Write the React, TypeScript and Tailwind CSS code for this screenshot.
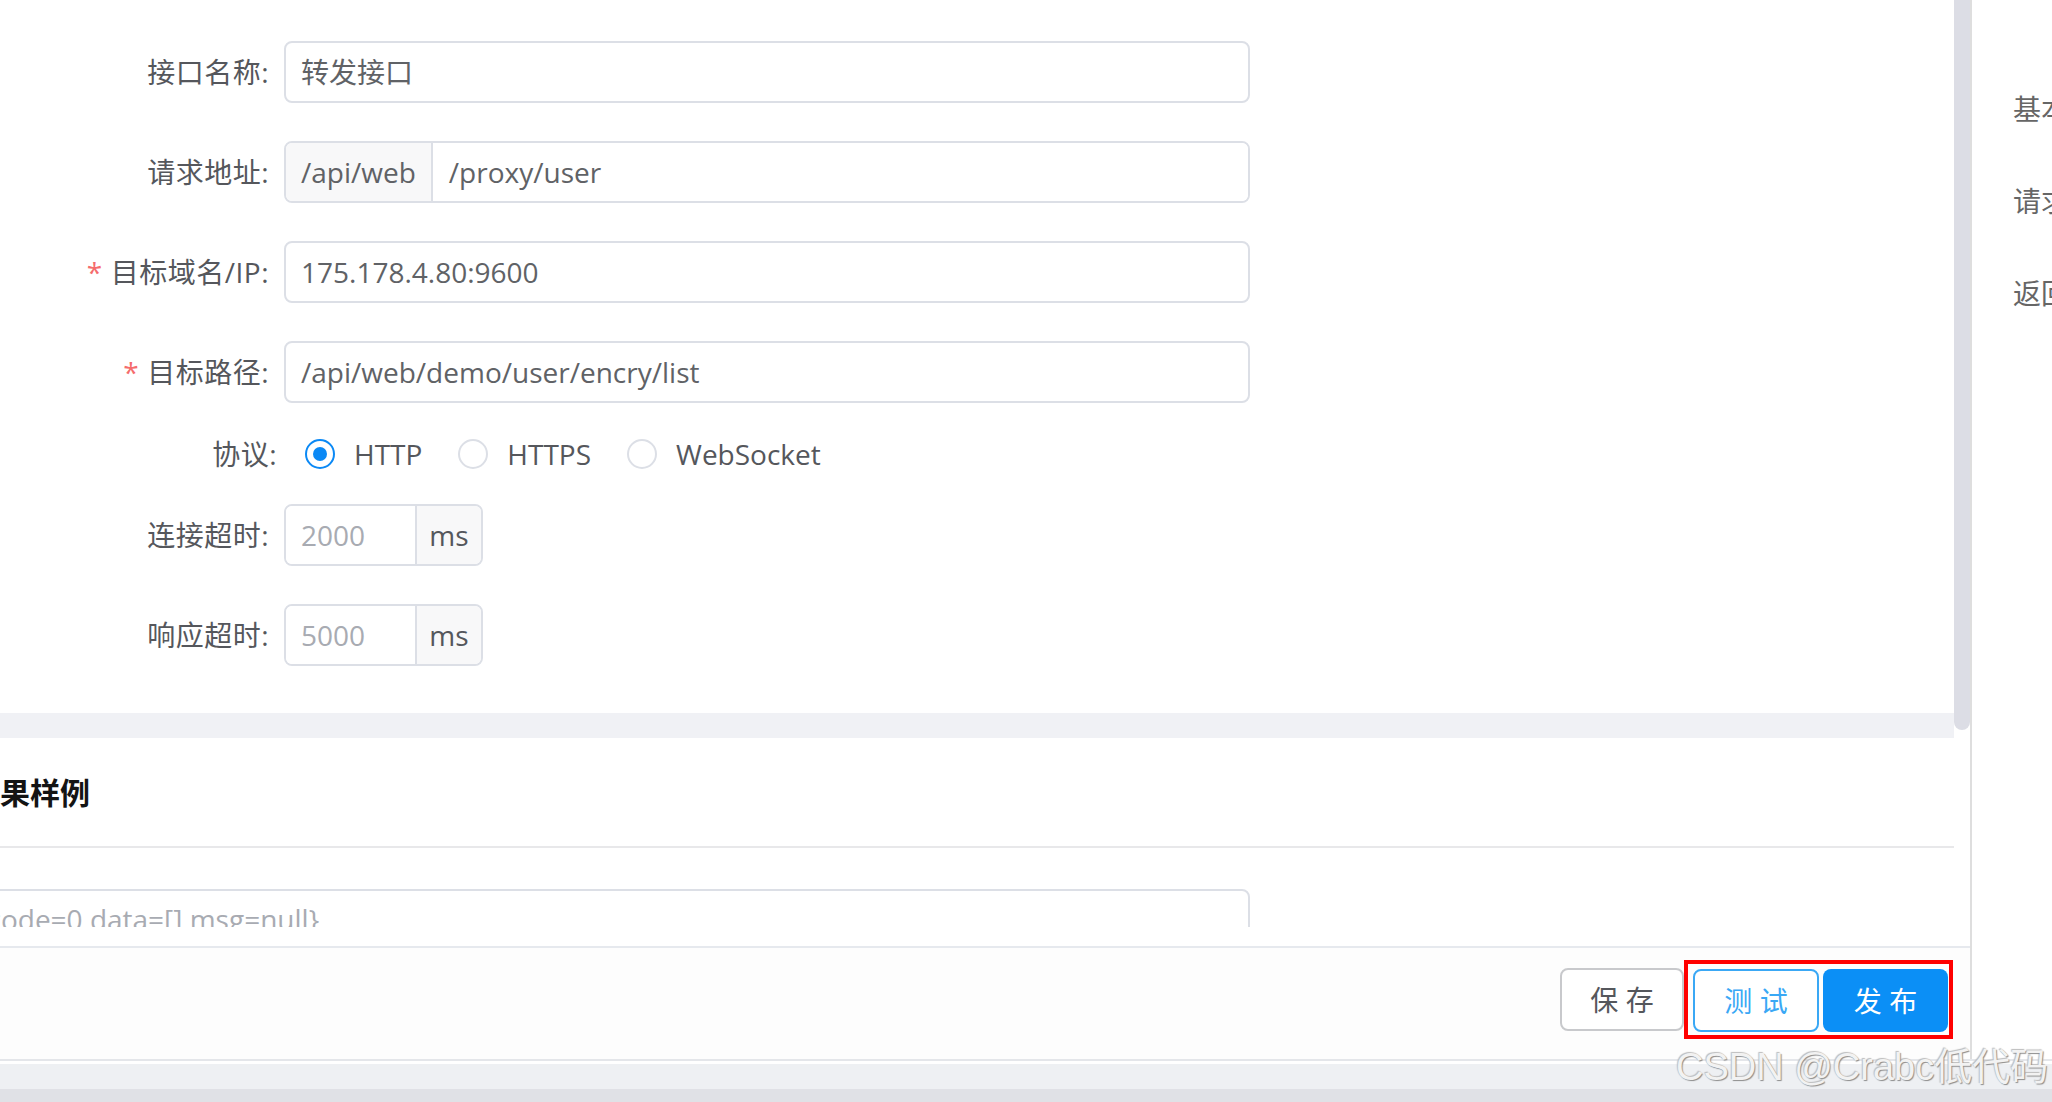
import React from "react";

const FONT = '"Open Sans", "Noto Sans CJK SC", sans-serif';

function Label({ text, required, width = "w-[269px]" }: { text: string; required?: boolean; width?: string }) {
  return (
    <div className={`${width} shrink-0 flex justify-end items-center text-[28px] leading-[40px] text-[#55575c] tracking-[0.5px]`}>
      {required && <span className="text-[#f56c6c] mr-[8px]">*</span>}
      <span>{text}</span>
    </div>
  );
}

function TextInput({ value }: { value: string }) {
  return (
    <div className="ml-[15px] w-[966px] h-[62px] border-2 border-[#dcdfe6] rounded-[8px] bg-white flex items-center px-[15px] text-[28px] text-[#606266]">
      {value}
    </div>
  );
}

function Radio({ checked, label }: { checked?: boolean; label: string }) {
  return (
    <div className="flex items-center mr-[36px]">
      <div
        className={`w-[30px] h-[30px] rounded-full border-2 flex items-center justify-center ${
          checked ? "border-[#0b89f5]" : "border-[#dcdfe6]"
        }`}
      >
        {checked && <div className="w-[14px] h-[14px] rounded-full bg-[#0b89f5]" />}
      </div>
      <span className="ml-[19px] text-[28px] leading-[40px] text-[#55575c]">{label}</span>
    </div>
  );
}

function Timeout({ value }: { value: string }) {
  return (
    <div className="ml-[15px] w-[199px] h-[62px] border-2 border-[#dcdfe6] rounded-[8px] flex overflow-hidden">
      <div className="w-[129px] bg-white flex items-center pl-[15px] text-[28px] text-[#a8abb2]">{value}</div>
      <div className="flex-1 border-l-2 border-[#dcdfe6] bg-[#f8f8f9] flex items-center justify-center text-[28px] text-[#55575c]">
        ms
      </div>
    </div>
  );
}

export default function App() {
  return (
    <div className="w-[2052px] h-[1102px] overflow-hidden bg-white relative" style={{ fontFamily: FONT }}>
      <div className="flex h-[1059px]">
        {/* left */}
        <div className="w-[1970px] flex flex-col">
          <div className="h-[927px] shrink-0 flex overflow-hidden">
            {/* scroll content */}
            <div className="w-[1954px] flex flex-col">
              {/* card 1 */}
              <div className="bg-white h-[713px] shrink-0 pt-[41px] flex flex-col">
                <div className="flex items-center h-[62px]">
                  <Label text="接口名称:" />
                  <TextInput value="转发接口" />
                </div>
                <div className="flex items-center h-[62px] mt-[38px]">
                  <Label text="请求地址:" />
                  <div className="ml-[15px] w-[966px] h-[62px] border-2 border-[#dcdfe6] rounded-[8px] flex overflow-hidden text-[28px] text-[#606266]">
                    <div className="bg-[#f8f8f9] border-r-2 border-[#dcdfe6] flex items-center px-[15px]">/api/web</div>
                    <div className="flex items-center px-[16px] bg-white flex-1">/proxy/user</div>
                  </div>
                </div>
                <div className="flex items-center h-[62px] mt-[38px]">
                  <Label text="目标域名/IP:" required />
                  <TextInput value="175.178.4.80:9600" />
                </div>
                <div className="flex items-center h-[62px] mt-[38px]">
                  <Label text="目标路径:" required />
                  <TextInput value="/api/web/demo/user/encry/list" />
                </div>
                <div className="flex items-center h-[62px] mt-[20px]">
                  <Label text="协议:" width="w-[277px]" />
                  <div className="ml-[28px] flex items-center">
                    <Radio checked label="HTTP" />
                    <Radio label="HTTPS" />
                    <Radio label="WebSocket" />
                  </div>
                </div>
                <div className="flex items-center h-[62px] mt-[19px]">
                  <Label text="连接超时:" />
                  <Timeout value="2000" />
                </div>
                <div className="flex items-center h-[62px] mt-[38px]">
                  <Label text="响应超时:" />
                  <Timeout value="5000" />
                </div>
              </div>
              {/* gray band */}
              <div className="h-[25px] bg-[#f0f1f5] shrink-0" />
              {/* card 2 */}
              <div className="bg-white flex-1 pt-[35px] flex flex-col">
                <div className="-ml-[90px] text-[30px] leading-[40px] font-bold text-[#141414] whitespace-nowrap">
                  返回结果样例
                </div>
                <div className="mt-[33px] h-[2px] bg-[#e8e8ea] shrink-0" />
                <div className="mt-[41px] -ml-[39px] w-[1289px] h-[120px] shrink-0 border-2 border-[#dcdfe6] rounded-[8px] pt-[8px] pl-[14px] text-[28px] leading-[40px] text-[#a8abb2] whitespace-nowrap">
                  {"{code=0,data=[],msg=null}"}
                </div>
              </div>
            </div>
            {/* scrollbar */}
            <div className="w-[16px] bg-white">
              <div className="h-[730px] bg-[#dcdde5] rounded-b-full" />
            </div>
          </div>
          <div className="h-[19px] bg-white shrink-0" />
          {/* footer */}
          <div className="h-[113px] shrink-0 border-t-2 border-[#e6e9ee] bg-[#fdfdfd] flex justify-end items-start pt-[12px] pr-[17px]">
            <div className="flex items-center h-[79px]">
              <button className="w-[124px] h-[63px] border-2 border-[#c8c9cc] rounded-[8px] bg-white text-[28px] text-[#55575c]">
                保 存
              </button>
              <div className="border-4 border-[#ff0000] pl-[5px] pr-[1px] pt-[5px] pb-[3px] flex gap-[4px]">
                <button className="w-[126px] h-[63px] border-2 border-[#3aa8f5] rounded-[8px] bg-white text-[28px] text-[#3aa8f5]">
                  测 试
                </button>
                <button className="w-[125px] h-[63px] rounded-[8px] bg-[#0b8ff6] text-[28px] text-white">
                  发 布
                </button>
              </div>
            </div>
          </div>
        </div>
        {/* divider line */}
        <div className="w-[2px] bg-[#dedede]" />
        {/* right panel */}
        <div className="w-[80px] bg-white pt-[89px] pl-[41px] flex flex-col gap-[52px] overflow-hidden">
          <div className="text-[28px] leading-[40px] text-[#666] whitespace-nowrap">基本信息</div>
          <div className="text-[28px] leading-[40px] text-[#666] whitespace-nowrap">请求参数</div>
          <div className="text-[28px] leading-[40px] text-[#666] whitespace-nowrap">返回结果</div>
        </div>
      </div>
      <div className="h-[2px] bg-[#e4e6ea]" />
      <div className="h-[3px] bg-white" />
      <div className="h-[25px] bg-[#eef0f3]" />
      <div className="h-[13px] bg-[#e0e1e6]" />
      {/* watermark */}
      <div
        className="absolute left-[1676px] top-[1043px] text-[38px] leading-[48px] text-[#f2f2f2] whitespace-nowrap"
        style={{ fontFamily: '"Liberation Sans", "Noto Sans CJK SC", sans-serif', textShadow: "1px 1px 1px #8c8c8c, -1px -1px 1px #bdbdbd" }}
      >
        CSDN @Crabc低代码
      </div>
    </div>
  );
}
